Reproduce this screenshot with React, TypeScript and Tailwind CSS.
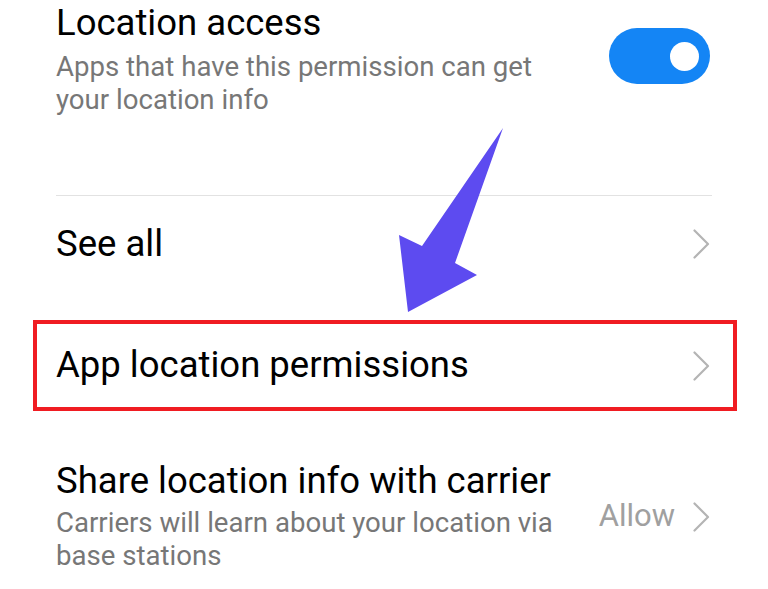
import React from "react";

const Chevron: React.FC = () => (
  <svg width="17" height="30" viewBox="0 0 17 30" fill="none" className="shrink-0">
    <path d="M1.5 1.5 L15 15 L1.5 28.5" stroke="#b4b4b4" strokeWidth="2.2" strokeLinecap="round" strokeLinejoin="round" />
  </svg>
);

const Toggle: React.FC = () => (
  <div className="w-[101px] h-[56px] rounded-full bg-[#1485f5] flex items-center justify-end pr-[11px] shrink-0">
    <div className="w-[29px] h-[29px] rounded-full bg-white" />
  </div>
);

export default function App() {
  return (
    <div className="relative w-[768px] h-[589px] bg-white overflow-hidden" style={{ fontFamily: "Roboto, 'Noto Sans', sans-serif" }}>
      {/* Location access */}
      <div className="flex justify-between pl-[56px] pr-[58px] pt-[3px]">
        <div>
          <div className="text-[36.5px] leading-[40px] text-black">Location access</div>
          <div className="mt-[7px] text-[27.6px] leading-[33px] text-[#777777] w-[520px]">
            Apps that have this permission can get your location info
          </div>
        </div>
        <div className="mt-[25px]">
          <Toggle />
        </div>
      </div>

      <div className="mt-[79px] mx-[56px] h-px bg-[#e2e2e2]" />

      {/* See all */}
      <div className="h-[96px] flex items-center justify-between pl-[56px] pr-[58px]">
        <div className="text-[36.5px] text-black">See all</div>
        <Chevron />
      </div>

      {/* App location permissions */}
      <div className="mt-[28px] ml-[33px] mr-[31px] h-[91px] border-4 border-[#f01c22] flex items-center justify-between pl-[19px] pr-[23px]">
        <div className="text-[36.5px] text-black">App location permissions</div>
        <Chevron />
      </div>

      {/* Share location info */}
      <div className="mt-[50px] flex items-center justify-between pl-[56px] pr-[58px]">
        <div>
          <div className="text-[36.5px] leading-[40px] text-black">Share location info with carrier</div>
          <div className="mt-[5px] text-[27.6px] leading-[33px] text-[#777777] w-[530px]">
            Carriers will learn about your location via base stations
          </div>
        </div>
        <div className="flex items-center gap-[18px]">
          <span className="text-[31px] text-[#a0a0a0]">Allow</span>
          <Chevron />
        </div>
      </div>

      {/* Arrow overlay */}
      <svg className="absolute left-0 top-0 pointer-events-none" width="768" height="589" viewBox="0 0 768 589">
        <polygon points="503,128 455,263 477,275 408,312 399,235 422,246" fill="#5d4bf0" />
      </svg>
    </div>
  );
}
